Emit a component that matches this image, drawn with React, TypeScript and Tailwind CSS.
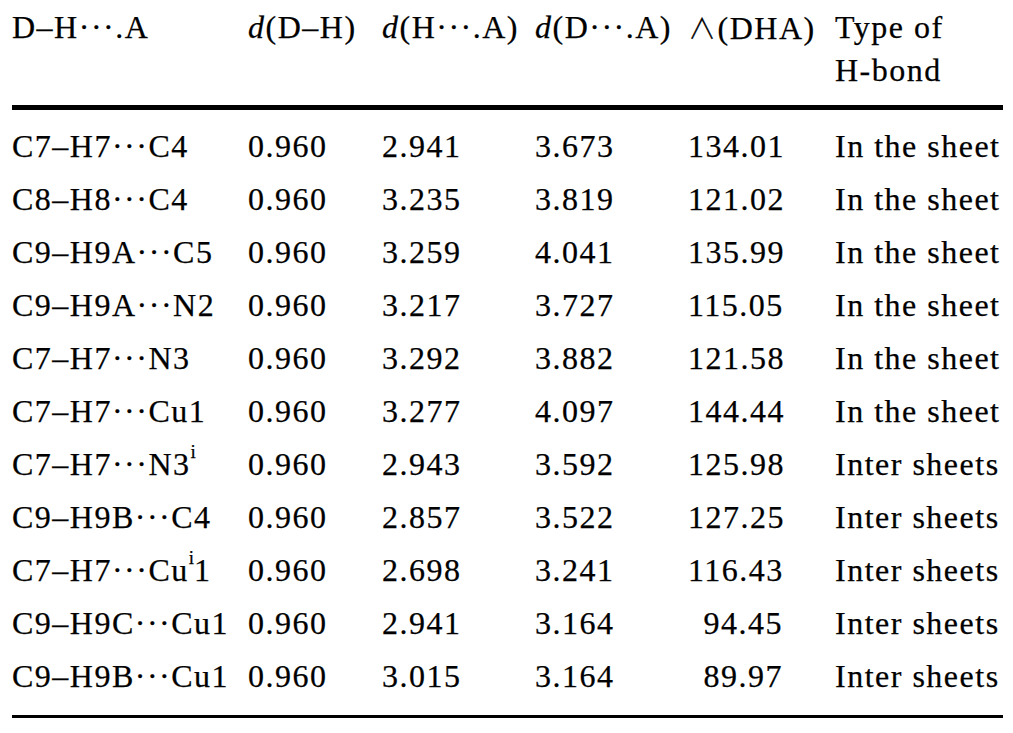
const Sup = () => <sup className="text-[19px] relative -top-[17px] align-baseline tracking-normal">i</sup>;

const rows: [React.ReactNode, string, string, string, string, string][] = [
    ['C7–H7···C4', '0.960', '2.941', '3.673', '134.01', 'In the sheet'],
    ['C8–H8···C4', '0.960', '3.235', '3.819', '121.02', 'In the sheet'],
    ['C9–H9A···C5', '0.960', '3.259', '4.041', '135.99', 'In the sheet'],
    ['C9–H9A···N2', '0.960', '3.217', '3.727', '115.05', 'In the sheet'],
    ['C7–H7···N3', '0.960', '3.292', '3.882', '121.58', 'In the sheet'],
    ['C7–H7···Cu1', '0.960', '3.277', '4.097', '144.44', 'In the sheet'],
    [<>C7–H7···N3<Sup /></>, '0.960', '2.943', '3.592', '125.98', 'Inter sheets'],
    ['C9–H9B···C4', '0.960', '2.857', '3.522', '127.25', 'Inter sheets'],
    [<>C7–H7···Cu<Sup />1</>, '0.960', '2.698', '3.241', '116.43', 'Inter sheets'],
    ['C9–H9C···Cu1', '0.960', '2.941', '3.164', '94.45', 'Inter sheets'],
    ['C9–H9B···Cu1', '0.960', '3.015', '3.164', '89.97', 'Inter sheets'],
];

const cols = 'grid grid-cols-[236px_134px_153px_153px_147px_1fr]';

export default function App() {
    return (
        <div className="w-[1013px] h-[733px] bg-white text-black pl-[12px] pr-[10px] font-['Liberation_Serif','Times_New_Roman',serif] text-[32px] tracking-[1.5px] [-webkit-text-stroke:0.25px_black]">
            <div className={`${cols} leading-[43px] pt-[6px] pb-[13px] whitespace-nowrap`}>
                <div>D–H···.A</div>
                <div><i>d</i>(D–H)</div>
                <div><i>d</i>(H···.A)</div>
                <div><i>d</i>(D···.A)</div>
                <div>
                    <span className="font-['Noto_Sans_CJK_JP',sans-serif] font-light text-[28px]">∧</span>(DHA)
                </div>
                <div>Type of<br />H-bond</div>
            </div>
            <div className="h-[5px] bg-black" />
            <div className="pt-[10px] pb-[12px]">
                {rows.map((r, i) => (
                    <div key={i} className={`${cols} leading-[53px] h-[53px] whitespace-nowrap`}>
                        <div>{r[0]}</div>
                        <div>{r[1]}</div>
                        <div>{r[2]}</div>
                        <div>{r[3]}</div>
                        <div className="text-right pr-[52px]">{r[4]}</div>
                        <div>{r[5]}</div>
                    </div>
                ))}
            </div>
            <div className="h-[3px] bg-black" />
        </div>
    );
}
